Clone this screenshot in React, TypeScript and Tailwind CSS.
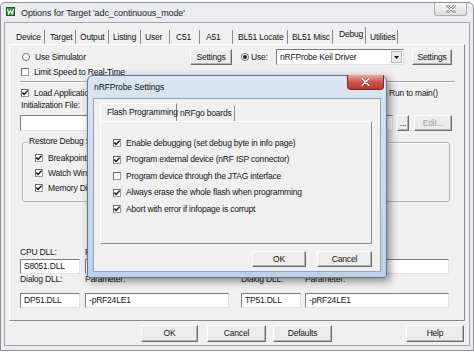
import React from "react";

function Check({ on }: { on: boolean }) {
  return (
    <span className="w-[8px] h-[8px] border border-t-[#6a6a6a] border-l-[#6a6a6a] border-r-[#9a9a9a] border-b-[#9a9a9a] bg-white flex items-center justify-center shrink-0">
      {on && (
        <svg width="6" height="6" viewBox="0 0 6 6">
          <polyline points="0.4,2.6 2.1,4.5 5.6,0.7" fill="none" stroke="#111" strokeWidth="1.5" />
        </svg>
      )}
    </span>
  );
}

function CheckRow({ on, label, className = "" }: { on: boolean; label: string; className?: string }) {
  return (
    <div className={`flex items-center gap-[5px] h-[12px] ${className}`}>
      <Check on={on} />
      {label && <span className="whitespace-nowrap leading-none">{label}</span>}
    </div>
  );
}

function Radio({ on }: { on: boolean }) {
  return (
    <span className="w-[8px] h-[8px] rounded-full border border-[#6f6f6f] bg-white flex items-center justify-center shrink-0">
      {on && <span className="w-[4px] h-[4px] rounded-full bg-[#222]" />}
    </span>
  );
}

function Btn({ label, className = "", disabled = false }: { label: string; className?: string; disabled?: boolean }) {
  return (
    <div
      className={`flex items-center justify-center shrink-0 bg-[#ececec] border border-t-[#fdfdfd] border-l-[#fdfdfd] border-r-[#6c6c6c] border-b-[#6c6c6c] shadow-[inset_-1px_-1px_0_#b4b4b4] leading-none whitespace-nowrap ${
        disabled ? "text-[#a3a3a3]" : ""
      } ${className}`}
    >
      {label}
    </div>
  );
}

function Input({ value = "", className = "" }: { value?: string; className?: string }) {
  return (
    <div
      className={`bg-white border border-t-[#7d7d7d] border-l-[#7d7d7d] border-r-[#e2e2e2] border-b-[#e2e2e2] pl-[3px] flex items-center leading-none whitespace-nowrap overflow-hidden shrink-0 ${className}`}
    >
      {value}
    </div>
  );
}

function Group({ className = "", items, label }: { className?: string; items: string[]; label?: string }) {
  return (
    <div className={`relative h-[60px] border border-[#b4b4b4] rounded-[2px] shadow-[inset_1px_1px_0_#fff] pl-[12px] pt-[9px] flex flex-col gap-[3px] ${className}`}>
      {label && (
        <span className="absolute -top-[6px] left-[5px] bg-[#f0f0f0] px-[1px] leading-none whitespace-nowrap">{label}</span>
      )}
      {items.map((t) => (
        <CheckRow key={t} on label={t} />
      ))}
    </div>
  );
}

const tabs = [
  { t: "Device", c: "w-[35px] pl-[6px]" },
  { t: "Target", c: "w-[31px] pl-[5px]" },
  { t: "Output", c: "w-[33px] pl-[4px]" },
  { t: "Listing", c: "w-[32px] pl-[4px]" },
  { t: "User", c: "w-[29px] pl-[4px]" },
  { t: "C51", c: "w-[30px] pl-[6px]" },
  { t: "A51", c: "w-[33px] pl-[6px]" },
  { t: "BL51 Locate", c: "w-[55px] pl-[5px]" },
  { t: "BL51 Misc", c: "w-[45px] pl-[4px]" },
  { t: "Debug", c: "w-[33px] pl-[6px]", sel: true },
  { t: "Utilities", c: "w-[32px] pl-[4px]" },
];

const nrfItems = [
  { on: true, t: "Enable debugging (set debug byte in info page)" },
  { on: true, t: "Program external device (nRF ISP connector)" },
  { on: false, t: "Program device through the JTAG interface" },
  { on: true, t: "Always erase the whole flash when programming" },
  { on: true, t: "Abort with error if infopage is corrupt" },
];

export default function App() {
  return (
    <div className="w-[474px] h-[354px] bg-white overflow-hidden relative font-['Liberation_Sans',Arial,sans-serif] text-[8.5px] tracking-[-0.2px] text-[#141414]">
      {/* main window */}
      <div className="mt-[2px] h-[349px] border border-[#8e9094] rounded-t-[5px] bg-[#eaecef] flex flex-col">
        {/* title bar */}
        <div className="h-[19px] flex items-start shrink-0">
          <div className="ml-[5px] mt-[4px] w-[9px] h-[9px] bg-[#2f8b3b] border border-[#1c5c25] flex items-center justify-center">
            <svg width="7" height="7" viewBox="0 0 7 7">
              <polyline points="0.5,1 1.8,6 3.5,2.5 5.2,6 6.5,1" fill="none" stroke="#fff" strokeWidth="1.1" />
            </svg>
          </div>
          <span className="ml-[6px] text-[9px] tracking-[-0.1px] leading-[21px] text-[#1e1e1e] whitespace-nowrap">
            Options for Target 'adc_continuous_mode'
          </span>
          <div className="ml-auto mr-[6px] w-[33px] h-[13px] rounded-b-[3px] border border-t-0 border-[#a9abae] bg-gradient-to-b from-[#f7f7f7] to-[#dedfe1] flex items-center justify-center">
            <svg width="10" height="8" viewBox="0 0 10 8">
              <path d="M1.5 0.8 L8.5 7.2 M8.5 0.8 L1.5 7.2" stroke="#8a8a8a" strokeWidth="2.6" strokeLinecap="round" />
              <path d="M1.5 0.8 L8.5 7.2 M8.5 0.8 L1.5 7.2" stroke="#f4f4f4" strokeWidth="1" strokeLinecap="round" />
            </svg>
          </div>
        </div>

        {/* client */}
        <div className="mx-[3px] h-[324px] border border-[#a2a6ab] bg-[#f0f0f0] flex flex-col px-[4px]">
          {/* tabs */}
          <div className="mt-[4px] ml-[1px] h-[17px] flex items-end shrink-0">
            {tabs.map((tb) =>
              tb.sel ? (
                <div key={tb.t} className={`h-[17px] border-r border-[#8a8a8a] pt-[3px] leading-none whitespace-nowrap ${tb.c}`}>
                  {tb.t}
                </div>
              ) : (
                <div key={tb.t} className={`h-[14px] border-r border-[#8a8a8a] pt-[3px] leading-none whitespace-nowrap ${tb.c}`}>
                  {tb.t}
                </div>
              )
            )}
          </div>

          {/* tab panel */}
          <div className="h-[277px] border border-t-white border-l-white border-r-[#8a8a8a] border-b-[#8a8a8a] pl-[10px] pr-[9px] flex flex-col shrink-0">
            {/* row 1 */}
            <div className="mt-[4px] h-[16px] flex gap-[9px]">
              <div className="w-[212px] flex items-center">
                <span className="ml-[2px]"><Radio on={false} /></span>
                <span className="ml-[5px] leading-none">Use Simulator</span>
                <Btn label="Settings" className="ml-auto w-[42px] h-[16px]" />
              </div>
              <div className="w-[211px] flex items-center">
                <div className="w-[35px] flex items-center gap-[2px]">
                  <Radio on />
                  <span className="leading-none">Use:</span>
                </div>
                <div className="w-[128px] h-[16px] bg-white border border-t-[#7d7d7d] border-l-[#7d7d7d] border-r-[#e2e2e2] border-b-[#e2e2e2] flex items-center">
                  <span className="pl-[3px] leading-none whitespace-nowrap">nRFProbe Keil Driver</span>
                  <div className="ml-auto mr-[1px] w-[11px] h-[12px] bg-[#eaeaea] border border-[#b8b8b8] flex items-center justify-center">
                    <svg width="5" height="3" viewBox="0 0 5 3">
                      <polygon points="0,0 5,0 2.5,3" fill="#111" />
                    </svg>
                  </div>
                </div>
                <Btn label="Settings" className="ml-[8px] w-[40px] h-[16px]" />
              </div>
            </div>

            {/* row 2 */}
            <div className="mt-[1px] flex gap-[9px]">
              <div className="w-[212px]">
                <CheckRow on={false} label="Limit Speed to Real-Time" className="ml-[1px]" />
              </div>
            </div>

            {/* separator */}
            <div className="mt-[3px] h-px bg-[#a3a3a3]" />
            <div className="h-px bg-white" />

            {/* row 3 */}
            <div className="mt-[4px] flex gap-[9px]">
              <div className="w-[212px] flex">
                <CheckRow on label="Load Application at Startup" className="ml-[1px] w-[135px]" />
              </div>
              <div className="w-[211px] flex">
                <div className="w-[135px]" />
                <CheckRow on={false} label="Run to main()" />
              </div>
            </div>

            {/* row 4 */}
            <div className="flex gap-[9px] h-[12px] items-center">
              <div className="w-[212px] pl-[1px] leading-none">Initialization File:</div>
              <div className="w-[211px]" />
            </div>

            {/* row 5 */}
            <div className="mt-[4px] h-[16px] flex gap-[9px]">
              <div className="w-[212px] flex">
                <Input className="w-[154px] h-[16px]" />
              </div>
              <div className="w-[211px] flex">
                <Input className="w-[152px] h-[16px]" />
                <Btn label="..." className="ml-[4px] w-[12px] h-[16px]" />
                <Btn label="Edit..." disabled className="ml-[5px] w-[38px] h-[16px]" />
              </div>
            </div>

            {/* groups */}
            <div className="mt-[11px] flex gap-[9px]">
              <div className="w-[212px]">
                <Group
                  className="ml-[2px] w-[208px]"
                  label="Restore Debug Session Settings"
                  items={["Breakpoints", "Watch Windows", "Memory Display"]}
                />
              </div>
              <div className="w-[211px]">
                <Group className="ml-[2px] w-[207px]" items={[]} />
              </div>
            </div>

            {/* DLL labels */}
            <div className="mt-[44px] h-[12px] flex gap-[9px] items-center">
              <div className="w-[212px] flex leading-none">
                <span className="w-[65px]">CPU DLL:</span>
                <span>Parameter:</span>
              </div>
              <div className="w-[211px]" />
            </div>
            <div className="mt-[1px] flex gap-[9px]">
              <div className="w-[212px] flex">
                <Input value="S8051.DLL" className="w-[60px] h-[15px]" />
                <Input className="ml-[5px] w-[144px] h-[15px]" />
              </div>
              <div className="w-[211px] flex">
                <Input className="w-[60px] h-[15px]" />
                <Input className="ml-[4px] w-[144px] h-[15px]" />
              </div>
            </div>
            <div className="h-[10px] flex gap-[9px] items-center">
              <div className="w-[212px] flex leading-none">
                <span className="w-[65px]">Dialog DLL:</span>
                <span>Parameter:</span>
              </div>
              <div className="w-[211px] flex leading-none">
                <span className="w-[64px]">Dialog DLL:</span>
                <span>Parameter:</span>
              </div>
            </div>
            <div className="mt-[9px] flex gap-[9px]">
              <div className="w-[212px] flex">
                <Input value="DP51.DLL" className="w-[60px] h-[15px]" />
                <Input value="-pRF24LE1" className="ml-[5px] w-[144px] h-[15px]" />
              </div>
              <div className="w-[211px] flex">
                <Input value="TP51.DLL" className="w-[60px] h-[15px]" />
                <Input value="-pRF24LE1" className="ml-[4px] w-[144px] h-[15px]" />
              </div>
            </div>
          </div>

          {/* bottom buttons */}
          <div className="mt-[4px] h-[17px] flex pr-[1px]">
            <Btn label="OK" className="ml-[132px] w-[57px] h-[17px]" />
            <Btn label="Cancel" className="ml-[9px] w-[59px] h-[17px]" />
            <Btn label="Defaults" className="ml-[7px] w-[59px] h-[17px]" />
            <Btn label="Help" className="ml-auto w-[58px] h-[17px]" />
          </div>
        </div>
      </div>

      {/* nRFProbe Settings dialog */}
      <div className="absolute left-[87px] top-[75px] w-[300px] h-[203px] rounded-t-[6px] rounded-b-[3px] border border-[#5d7796] bg-gradient-to-b from-[#dbe5f0] to-[#bdd1e8] shadow-[3px_3px_8px_rgba(0,0,0,0.45)] flex flex-col">
        <div className="h-[22px] pl-[6px] flex items-center shrink-0 relative">
          <span className="leading-none text-[8.5px] tracking-[-0.1px] text-[#111]">nRFProbe Settings</span>
          <div className="absolute left-[259px] -top-px w-[37px] h-[15px] rounded-b-[4px] border border-t-0 border-[#7a2a22] bg-gradient-to-b from-[#e9a89b] via-[#cf5543] to-[#b8382a] flex items-center justify-center">
            <svg width="9" height="8" viewBox="0 0 9 8">
              <path d="M1.2 0.8 L7.8 7.2 M7.8 0.8 L1.2 7.2" stroke="#6b1f18" strokeWidth="2.6" strokeLinecap="round" opacity="0.5" />
              <path d="M1.2 0.8 L7.8 7.2 M7.8 0.8 L1.2 7.2" stroke="#fff" strokeWidth="1.6" strokeLinecap="round" />
            </svg>
          </div>
        </div>
        <div className="mx-[5px] mb-[5px] flex-1 border border-[#8ea3bc] bg-[#f0f0f0] flex flex-col pl-[6px] pr-[8px]">
          {/* inner tabs */}
          <div className="mt-[4px] h-[18px] flex items-end shrink-0">
            <div className="w-[77px] h-[18px] border border-b-0 border-t-[#fdfdfd] border-l-[#fdfdfd] border-r-[#8a8a8a] pl-[6px] pt-[4px] leading-none whitespace-nowrap">
              Flash Programming
            </div>
            <div className="w-[58px] h-[15px] border-r border-[#8a8a8a] pl-[3px] pt-[3px] leading-none whitespace-nowrap">
              nRFgo boards
            </div>
          </div>
          <div className="w-[272px] h-[123px] border border-t-white border-l-white border-r-[#8a8a8a] border-b-[#8a8a8a] pl-[12px] pt-[15px] flex flex-col gap-[4.5px] shrink-0">
            {nrfItems.map((it) => (
              <CheckRow key={it.t} on={it.on} label={it.t} />
            ))}
          </div>
          <div className="mt-[7px] h-[16px] flex justify-end">
            <Btn label="OK" className="w-[54px] h-[16px]" />
            <Btn label="Cancel" className="ml-[11px] w-[55px] h-[16px]" />
          </div>
        </div>
      </div>
    </div>
  );
}
